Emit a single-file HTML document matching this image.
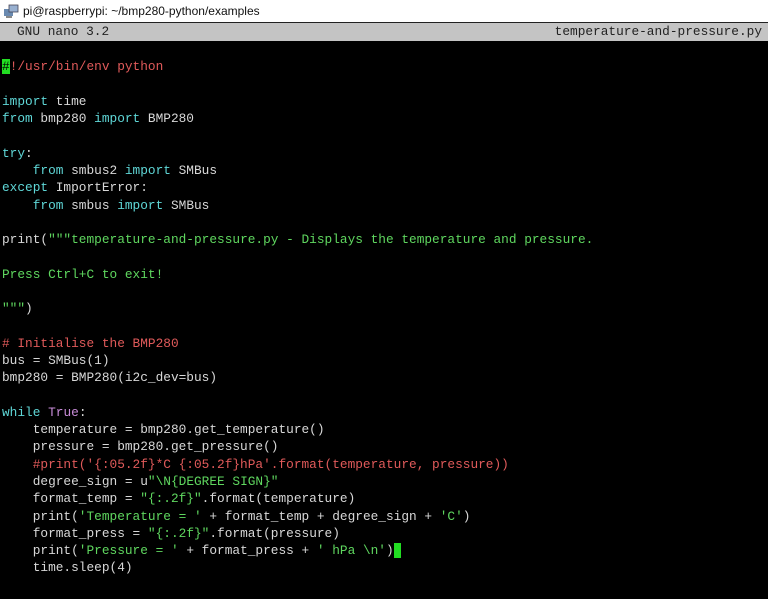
<!DOCTYPE html>
<html><head><style>
body{margin:0;width:768px;height:599px;overflow:hidden;background:#000;font-family:"Liberation Sans",sans-serif}
#tb{position:absolute;left:0;top:0;width:768px;height:22px;background:#fff;border-bottom:1px solid #222}
#tb span{position:absolute;left:23px;top:4px;font-size:12px;color:#111}
#hd{position:absolute;left:0;top:23px;width:768px;height:18px;background:#c4c4c4;font-family:"Liberation Mono",monospace;font-size:12.8px;color:#222;line-height:18px}
pre{position:absolute;left:2px;top:41px;margin:0;font-family:"Liberation Mono",monospace;font-size:12.8px;line-height:17.28px;color:#d8d8d8}
.k{color:#5fd7d7}.r{color:#e05a5a}.g{color:#5fd75f}.m{color:#c88cd8}
.cur{background:#22dd22;color:#000}
</style></head><body>
<div id="tb"><svg style="position:absolute;left:3px;top:3px" width="16" height="16"><rect x="1" y="6" width="9" height="7" fill="#6a8ab0"/><rect x="6" y="2" width="9" height="7" fill="#98b0d0" stroke="#445" stroke-width=".8"/><rect x="3" y="13" width="6" height="2" fill="#888"/></svg><span>pi@raspberrypi: ~/bmp280-python/examples</span></div>
<div id="hd"><span style="position:absolute;left:17px">GNU nano 3.2</span><span style="position:absolute;right:6px">temperature-and-pressure.py</span></div>
<pre>

<span class="cur">#</span><span class="r">!/usr/bin/env python</span>

<span class="k">import</span> time
<span class="k">from</span> bmp280 <span class="k">import</span> BMP280

<span class="k">try</span>:
    <span class="k">from</span> smbus2 <span class="k">import</span> SMBus
<span class="k">except</span> ImportError:
    <span class="k">from</span> smbus <span class="k">import</span> SMBus

print(<span class="g">"""temperature-and-pressure.py - Displays the temperature and pressure.</span>

<span class="g">Press Ctrl+C to exit!</span>

<span class="g">"""</span>)

<span class="r"># Initialise the BMP280</span>
bus = SMBus(1)
bmp280 = BMP280(i2c_dev=bus)

<span class="k">while</span> <span class="m">True</span>:
    temperature = bmp280.get_temperature()
    pressure = bmp280.get_pressure()
    <span class="r">#print('{:05.2f}*C {:05.2f}hPa'.format(temperature, pressure))</span>
    degree_sign = u<span class="g">"\N{DEGREE SIGN}"</span>
    format_temp = <span class="g">"{:.2f}"</span>.format(temperature)
    print(<span class="g">'Temperature = '</span> + format_temp + degree_sign + <span class="g">'C'</span>)
    format_press = <span class="g">"{:.2f}"</span>.format(pressure)
    print(<span class="g">'Pressure = '</span> + format_press + <span class="g">' hPa \n'</span>)<span class="cur"> </span>
    time.sleep(4)
</pre>
</body></html>
